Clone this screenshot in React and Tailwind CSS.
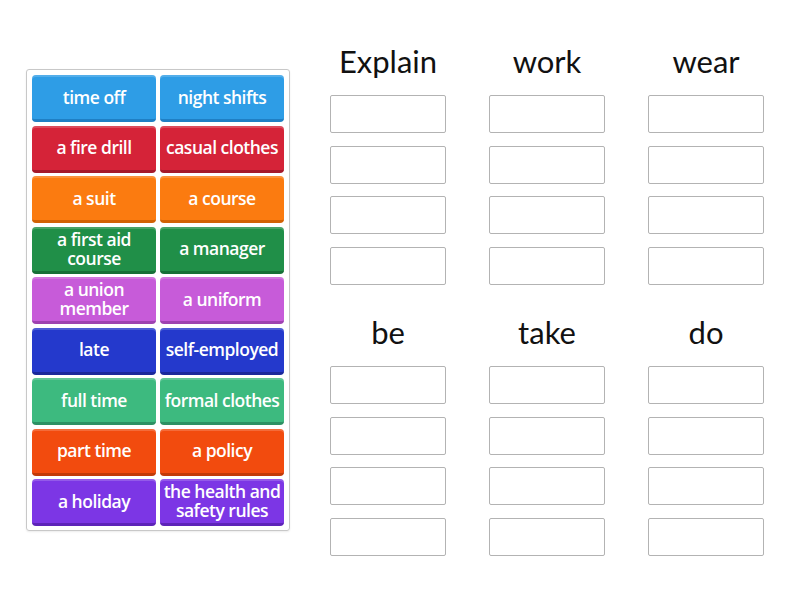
import React from 'react';

const tiles = [
  ['time off', 'bg-[#2e9de6] border-[#1f7fc4]'],
  ['night shifts', 'bg-[#2e9de6] border-[#1f7fc4]'],
  ['a fire drill', 'bg-[#d52338] border-[#a5182a]'],
  ['casual clothes', 'bg-[#d52338] border-[#a5182a]'],
  ['a suit', 'bg-[#fb7b10] border-[#d26205]'],
  ['a course', 'bg-[#fb7b10] border-[#d26205]'],
  ['a first aid course', 'bg-[#208f48] border-[#166f37]'],
  ['a manager', 'bg-[#208f48] border-[#166f37]'],
  ['a union member', 'bg-[#c75bd9] border-[#9e42b1]'],
  ['a uniform', 'bg-[#c75bd9] border-[#9e42b1]'],
  ['late', 'bg-[#2439cc] border-[#1a289a]'],
  ['self-employed', 'bg-[#2439cc] border-[#1a289a]'],
  ['full time', 'bg-[#3dba7f] border-[#2d9063]'],
  ['formal clothes', 'bg-[#3dba7f] border-[#2d9063]'],
  ['part time', 'bg-[#f24b0e] border-[#c23a08]'],
  ['a policy', 'bg-[#f24b0e] border-[#c23a08]'],
  ['a holiday', 'bg-[#7c36e5] border-[#5d24b8]'],
  ['the health and safety rules', 'bg-[#7c36e5] border-[#5d24b8]'],
];

const groups = [
  ['Explain', 'work', 'wear'],
  ['be', 'take', 'do'],
];

const Tile = ({ label, color }) => (
  <div
    className={`h-[47px] rounded-[4px] border-b-[3px] ${color} shadow-[inset_0_2px_0_rgba(255,255,255,0.18)] flex items-center justify-center text-center text-white text-[17.5px] leading-[19px] font-semibold tracking-[-0.5px] px-[1px]`}
    style={{ fontFamily: '"Open Sans", Lato, sans-serif' }}
  >
    {label}
  </div>
);

const Column = ({ title }) => (
  <div className="flex flex-col w-[116px]">
    <div className="h-[44px] flex items-center justify-center text-[31px] text-[#111] mb-[11px] pb-[2px]">
      {title}
    </div>
    <div className="flex flex-col gap-[12.5px]">
      {[0, 1, 2, 3].map((i) => (
        <div key={i} className="h-[38px] border border-[#b3b3b3] rounded-[2px] bg-white" />
      ))}
    </div>
  </div>
);

export default function App() {
  return (
    <div
      className="w-[800px] h-[600px] bg-white flex"
      style={{ fontFamily: 'Lato, "Noto Sans", sans-serif' }}
    >
      <div className="pl-[26px] pt-[69px]">
        <div className="w-[264px] border border-[#c8c8c8] rounded-[3px] p-[5px] pb-[4px] grid grid-cols-[124px_124px] gap-x-[4px] gap-y-[3.5px] shadow-[0_1px_2px_rgba(0,0,0,0.08)]">
          {tiles.map(([label, color]) => (
            <Tile key={label} label={label} color={color} />
          ))}
        </div>
      </div>
      <div className="pl-[40px] pt-[40px] flex flex-col gap-[26.5px]">
        {groups.map((g, gi) => (
          <div key={gi} className="flex gap-[43px]">
            {g.map((t) => (
              <Column key={t} title={t} />
            ))}
          </div>
        ))}
      </div>
    </div>
  );
}
